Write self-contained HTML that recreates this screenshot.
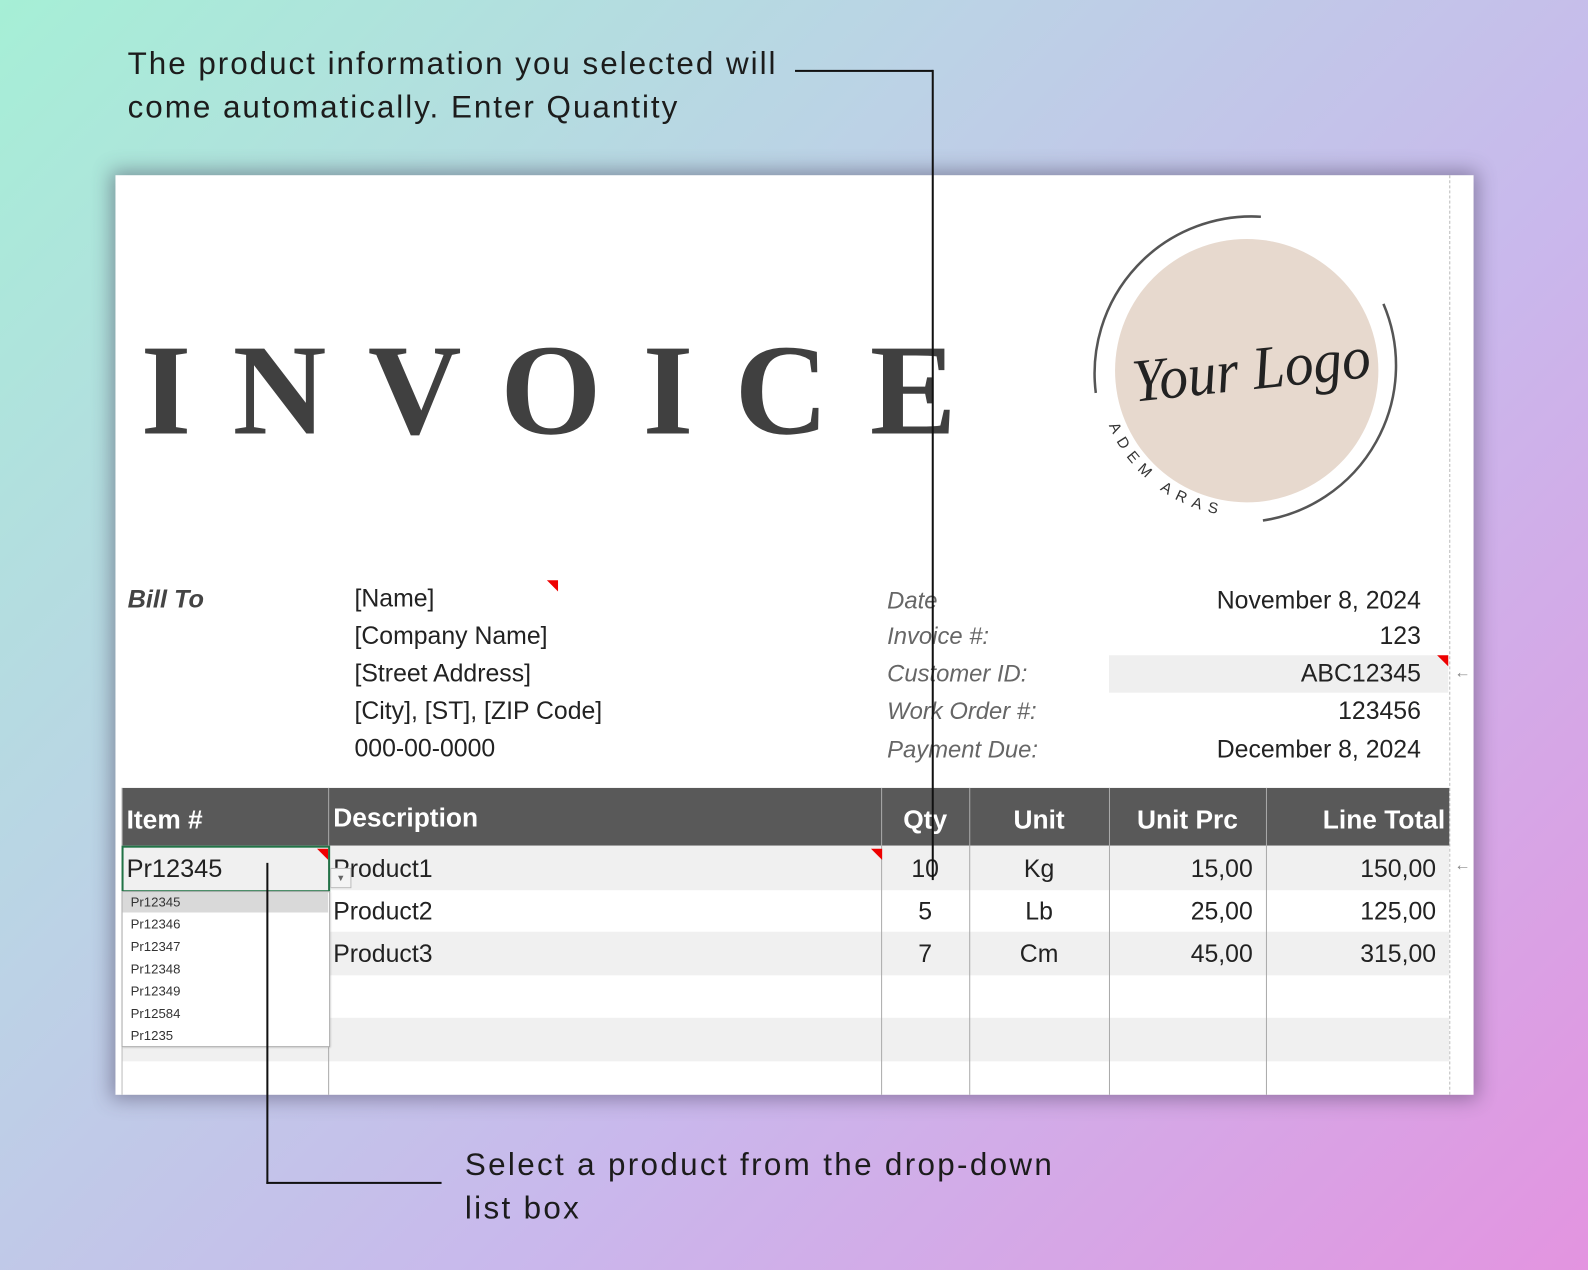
<!DOCTYPE html>
<html><head><meta charset="utf-8"><style>
html,body{margin:0;padding:0;width:1588px;height:1270px;overflow:hidden}
body{background:linear-gradient(135deg,#a6efd6 0%,#bcd2e6 35%,#c9b8ec 62%,#e394e0 100%)}
#w{position:absolute;left:0;top:0;width:1568px;height:1254px;transform:scale(1.01276);transform-origin:0 0;font-family:"Liberation Sans",sans-serif}
.a{position:absolute}
.ann{font-size:31px;color:#1c1c1c;letter-spacing:1.95px;line-height:43px}
.t{font-size:24.5px;color:#222;white-space:nowrap}
.l{font-size:23.5px;color:#666;font-style:italic;white-space:nowrap}
.h{font-size:26px;color:#fff;font-weight:bold;white-space:nowrap}
.tri{position:absolute;width:0;height:0;border-top:11px solid #e00;border-left:11px solid transparent}
.dd{position:absolute;left:129px;font-size:13px;color:#333}
</style></head><body><div id="w">
<div class="a ann" style="left:126px;top:41px">The product information you selected will<br>come automatically. Enter Quantity</div>

<div class="a" style="left:114px;top:173px;width:1341px;height:908px;background:#fff;box-shadow:0 0 18px 4px rgba(60,50,80,.45)"></div>
<div class="a" style="left:1431px;top:173px;height:908px;border-left:1.5px dashed #bbb"></div>

<div class="a" style="left:139px;top:310px;font-family:'Liberation Serif',serif;font-weight:bold;font-size:128px;color:#404040;letter-spacing:41px;line-height:150px;white-space:nowrap">INVOICE</div>

<svg class="a" style="left:1060px;top:200px" width="340" height="330" viewBox="1060 200 340 330">
<circle cx="1231" cy="366" r="130" fill="#e7d9ce"/>
<path d="M1245 214 A155 155 0 0 0 1082 388" fill="none" stroke="#555" stroke-width="2.5"/>
<path d="M1366 300 A155 155 0 0 1 1247 514" fill="none" stroke="#555" stroke-width="2.5"/>
<path id="arc" d="M1095 420 A145 145 0 0 0 1230 510" fill="none"/>
<text font-family="Liberation Sans,sans-serif" font-size="15" letter-spacing="7" fill="#333"><textPath href="#arc">ADEM ARAS</textPath></text>
<text x="1118" y="385" font-family="Liberation Serif,serif" font-style="italic" font-size="60" fill="#222" textLength="236" lengthAdjust="spacingAndGlyphs" transform="rotate(-6 1230 370)">Your Logo</text>
</svg>

<div class="a t" style="left:126px;top:578px;font-weight:bold;font-style:italic;color:#444;font-size:25px">Bill To</div>
<div class="a t" style="left:350px;top:578px">[Name]</div>
<div class="a t" style="left:350px;top:615px">[Company Name]</div>
<div class="a t" style="left:350px;top:652px">[Street Address]</div>
<div class="a t" style="left:350px;top:689px">[City], [ST], [ZIP Code]</div>
<div class="a t" style="left:350px;top:726px">000-00-0000</div>
<div class="tri" style="left:540px;top:573px"></div>

<div class="a" style="left:1095px;top:647px;width:335px;height:37px;background:#efefef"></div>
<div class="a l" style="left:876px;top:580px">Date</div>
<div class="a l" style="left:876px;top:615px">Invoice #:</div>
<div class="a l" style="left:876px;top:652px">Customer ID:</div>
<div class="a l" style="left:876px;top:689px">Work Order #:</div>
<div class="a l" style="left:876px;top:727px">Payment Due:</div>
<div class="a t" style="right:165px;top:580px">November 8, 2024</div>
<div class="a t" style="right:165px;top:615px">123</div>
<div class="a t" style="right:165px;top:652px">ABC12345</div>
<div class="a t" style="right:165px;top:689px">123456</div>
<div class="a t" style="right:165px;top:727px">December 8, 2024</div>
<div class="tri" style="left:1419px;top:647px"></div>
<div class="a" style="left:1436px;top:656px;color:#888;font-size:16px">←</div>
<div class="a" style="left:1436px;top:846px;color:#888;font-size:16px">←</div>

<div class="a" style="left:120px;top:778px;width:1311px;height:57px;background:#595959"></div>
<div class="a" style="left:120px;top:835px;width:1311px;height:44px;background:#f0f0f0"></div>
<div class="a" style="left:120px;top:920px;width:1311px;height:43px;background:#f0f0f0"></div>
<div class="a" style="left:120px;top:1005px;width:1311px;height:43px;background:#f0f0f0"></div>
<div class="a" style="left:120px;top:778px;height:303px;border-left:1px solid #bbb"></div>
<div class="a" style="left:324px;top:778px;height:303px;border-left:1px solid #aaa"></div>
<div class="a" style="left:870px;top:778px;height:303px;border-left:1px solid #aaa"></div>
<div class="a" style="left:957px;top:778px;height:303px;border-left:1px solid #aaa"></div>
<div class="a" style="left:1095px;top:778px;height:303px;border-left:1px solid #aaa"></div>
<div class="a" style="left:1250px;top:778px;height:303px;border-left:1px solid #aaa"></div>

<div class="a h" style="left:125px;top:794px">Item #</div>
<div class="a h" style="left:329px;top:792px">Description</div>
<div class="a h" style="left:870px;width:87px;text-align:center;top:794px">Qty</div>
<div class="a h" style="left:957px;width:138px;text-align:center;top:794px">Unit</div>
<div class="a h" style="left:1095px;width:155px;text-align:center;top:794px">Unit Prc</div>
<div class="a h" style="right:141px;top:794px">Line Total</div>

<div class="a t" style="left:125px;top:844px;font-size:25px">Pr12345</div>
<div class="a t" style="left:329px;top:845px">Product1</div>
<div class="a t" style="left:329px;top:887px">Product2</div>
<div class="a t" style="left:329px;top:929px">Product3</div>
<div class="a t" style="left:870px;width:87px;text-align:center;top:845px">10</div>
<div class="a t" style="left:870px;width:87px;text-align:center;top:887px">5</div>
<div class="a t" style="left:870px;width:87px;text-align:center;top:929px">7</div>
<div class="a t" style="left:957px;width:138px;text-align:center;top:845px">Kg</div>
<div class="a t" style="left:957px;width:138px;text-align:center;top:887px">Lb</div>
<div class="a t" style="left:957px;width:138px;text-align:center;top:929px">Cm</div>
<div class="a t" style="right:331px;top:845px">15,00</div>
<div class="a t" style="right:331px;top:887px">25,00</div>
<div class="a t" style="right:331px;top:929px">45,00</div>
<div class="a t" style="right:150px;top:845px">150,00</div>
<div class="a t" style="right:150px;top:887px">125,00</div>
<div class="a t" style="right:150px;top:929px">315,00</div>
<div class="tri" style="left:313px;top:838px"></div>
<div class="tri" style="left:860px;top:838px"></div>

<div class="a" style="left:120px;top:835px;width:202px;height:42px;border:2px solid #217346"></div>
<div class="a" style="left:326px;top:857px;width:19px;height:18px;border:1px solid #bbb;background:#f4f4f4;font-size:9px;color:#666;text-align:center;line-height:18px">▼</div>
<div class="a" style="left:120px;top:880px;width:204px;height:152px;background:#fff;border:1px solid #aaa;box-shadow:1px 1px 2px rgba(0,0,0,.2)"></div>
<div class="a" style="left:121px;top:881px;width:203px;height:20px;background:#d9d9d9"></div>
<div class="dd" style="top:883px">Pr12345</div>
<div class="dd" style="top:905px">Pr12346</div>
<div class="dd" style="top:927px">Pr12347</div>
<div class="dd" style="top:949px">Pr12348</div>
<div class="dd" style="top:971px">Pr12349</div>
<div class="dd" style="top:993px">Pr12584</div>
<div class="dd" style="top:1015px">Pr1235</div>

<div class="a" style="left:785px;top:69px;width:136px;height:2px;background:#111"></div>
<div class="a" style="left:920px;top:69px;width:2px;height:800px;background:#111"></div>
<div class="a" style="left:263px;top:852px;width:2px;height:317px;background:#111"></div>
<div class="a" style="left:263px;top:1167px;width:173px;height:2px;background:#111"></div>

<div class="a ann" style="left:459px;top:1128px;letter-spacing:2.3px">Select a product from the drop-down<br>list box</div>
</div></body></html>
